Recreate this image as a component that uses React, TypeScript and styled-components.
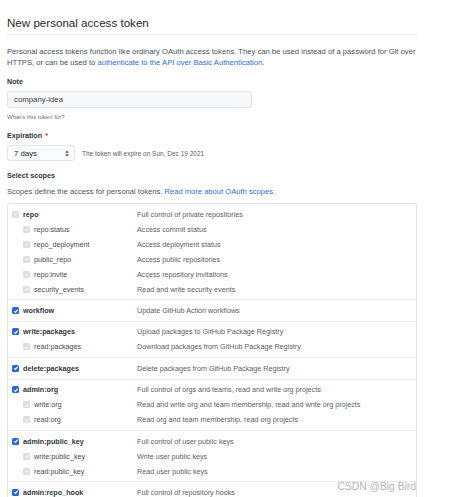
import React from 'react';
import styled, { createGlobalStyle } from 'styled-components';

const GlobalStyle = createGlobalStyle`
	html, body {
		margin: 0;
		padding: 0;
		background: #fff;
	}
	body {
		font-family: "Liberation Sans", Arial, sans-serif;
		color: #24292e;
	}
`

const Page = styled.div`
	position: relative;
	width: 410px;
	padding: 0 7px;
	height: 497px;
	overflow: hidden;
`
const Title = styled.h2`
	margin: 0;
	padding: 13px 0 1px;
	font-size: 11.6px;
	line-height: 20px;
	font-weight: 400;
	color: #24292e;
	border-bottom: 1px solid #e8eaed;
`
const Intro = styled.p`
	margin: 11px 0 0;
	font-size: 7.65px;
	line-height: 11px;
	color: #4a5259;
	white-space: nowrap;
`
const Link = styled.a`
	color: #2f6fd1;
	text-decoration: none;
`
const Label = styled.div<{ gap: number }>`
	margin-top: ${props => props.gap}px;
	font-size: 7.2px;
	line-height: 10px;
	font-weight: 700;
	color: #2f363d;
`
const Required = styled.span`
	color: #cb2431;
	margin-left: 3px;
`
const NoteInput = styled.div`
	margin-top: 4px;
	box-sizing: border-box;
	width: 245px;
	height: 17px;
	padding: 0 6px;
	display: flex;
	align-items: center;
	background: #f6f8fa;
	border: 1px solid #e1e4e8;
	border-radius: 3px;
	font-size: 7.8px;
	color: #3a3f44;
`
const Hint = styled.div`
	margin-top: 4px;
	font-size: 6px;
	line-height: 10px;
	color: #6a737d;
`
const ExpirationRow = styled.div`
	margin-top: 4px;
	display: flex;
	align-items: center;
	gap: 7px;
`
const Select = styled.div`
	box-sizing: border-box;
	width: 68px;
	height: 16px;
	padding: 0 5px 0 6px;
	display: flex;
	align-items: center;
	justify-content: space-between;
	background: #fafbfc;
	border: 1px solid #e1e4e8;
	border-radius: 3px;
	font-size: 7.8px;
	color: #24292e;
`
const ExpireText = styled.span`
	font-size: 6.5px;
	color: #586069;
`
const ScopesIntro = styled.div`
	margin-top: 6px;
	font-size: 7.6px;
	line-height: 10px;
	color: #4a5259;
`
const ScopeTable = styled.div`
	margin-top: 6px;
	border: 1px solid #e1e4e8;
	border-bottom: none;
	border-radius: 3px 3px 0 0;
`
const ScopeGroup = styled.div`
	padding: 2.7px 4px;
	& + & {
		border-top: 1px solid #e8eaed;
	}
`
const ScopeRow = styled.div`
	display: grid;
	grid-template-columns: 125px 1fr;
	height: 15px;
	align-items: center;
	font-size: 7.2px;
`
const ScopeName = styled.label<{ nested: boolean }>`
	display: flex;
	align-items: center;
	gap: 4px;
	padding-left: ${props => props.nested ? 11 : 0}px;
	font-weight: ${props => props.nested ? 400 : 700};
	color: ${props => props.nested ? '#444d56' : '#2f363d'};
`
const Box = styled.span<{ active: boolean }>`
	flex: none;
	box-sizing: border-box;
	width: 7px;
	height: 7px;
	border-radius: 1.5px;
	display: flex;
	align-items: center;
	justify-content: center;
	background: ${props => props.active ? '#2a66d4' : '#dcdee0'};
	& svg {
		width: 6px;
		height: 6px;
	}
`
const ScopeDesc = styled.span`
	color: #586069;
`
const Watermark = styled.div`
	position: absolute;
	right: 8px;
	bottom: 4px;
	font-family: "Liberation Sans", Arial, sans-serif;
	font-size: 10.3px;
	line-height: 13px;
	color: #b4b4b4;
	text-shadow: 0 0 1px #fff;
`

const Check: React.FC<{ active: boolean }> = ({ active }) => (
	<Box active={active}>
		<svg viewBox="0 0 10 10">
			<path d="M2 5.2 L4.2 7.3 L8 2.8" fill="none" stroke={active ? '#fff' : '#f2f3f4'} strokeWidth="1.8" />
		</svg>
	</Box>
)

interface Scope {
	name: string;
	desc: string;
	nested?: boolean;
	active?: boolean;
}

const groups: Scope[][] = [
	[
		{ name: 'repo', desc: 'Full control of private repositories' },
		{ name: 'repo:status', desc: 'Access commit status', nested: true },
		{ name: 'repo_deployment', desc: 'Access deployment status', nested: true },
		{ name: 'public_repo', desc: 'Access public repositories', nested: true },
		{ name: 'repo:invite', desc: 'Access repository invitations', nested: true },
		{ name: 'security_events', desc: 'Read and write security events', nested: true },
	],
	[
		{ name: 'workflow', desc: 'Update GitHub Action workflows', active: true },
	],
	[
		{ name: 'write:packages', desc: 'Upload packages to GitHub Package Registry', active: true },
		{ name: 'read:packages', desc: 'Download packages from GitHub Package Registry', nested: true },
	],
	[
		{ name: 'delete:packages', desc: 'Delete packages from GitHub Package Registry', active: true },
	],
	[
		{ name: 'admin:org', desc: 'Full control of orgs and teams, read and write org projects', active: true },
		{ name: 'write:org', desc: 'Read and write org and team membership, read and write org projects', nested: true },
		{ name: 'read:org', desc: 'Read org and team membership, read org projects', nested: true },
	],
	[
		{ name: 'admin:public_key', desc: 'Full control of user public keys', active: true },
		{ name: 'write:public_key', desc: 'Write user public keys', nested: true },
		{ name: 'read:public_key', desc: 'Read user public keys', nested: true },
	],
	[
		{ name: 'admin:repo_hook', desc: 'Full control of repository hooks', active: true },
	],
]

const Arrows = () => (
	<svg width="4" height="7" viewBox="0 0 4 7">
		<path d="M2 0.5 L3.8 2.8 H0.2 Z M2 6.5 L3.8 4.2 H0.2 Z" fill="#444d56" />
	</svg>
)

export default function App() {
	return (
		<Page>
			<GlobalStyle />
			<Title>New personal access token</Title>
			<Intro>
				Personal access tokens function like ordinary OAuth access tokens. They can be used instead of a password for Git over
				<br />
				HTTPS, or can be used to <Link>authenticate to the API over Basic Authentication</Link>.
			</Intro>
			<Label gap={9}>Note</Label>
			<NoteInput>company-idea</NoteInput>
			<Hint>What's this token for?</Hint>
			<Label gap={9}>Expiration<Required>*</Required></Label>
			<ExpirationRow>
				<Select>
					<span>7 days</span>
					<Arrows />
				</Select>
				<ExpireText>The token will expire on Sun, Dec 19 2021</ExpireText>
			</ExpirationRow>
			<Label gap={10}>Select scopes</Label>
			<ScopesIntro>
				Scopes define the access for personal tokens. <Link>Read more about OAuth scopes.</Link>
			</ScopesIntro>
			<ScopeTable>
				{groups.map((group, gindex) => (
					<ScopeGroup key={gindex}>
						{group.map(scope => (
							<ScopeRow key={scope.name}>
								<ScopeName nested={!!scope.nested}>
									<Check active={!!scope.active} />
									{scope.name}
								</ScopeName>
								<ScopeDesc>{scope.desc}</ScopeDesc>
							</ScopeRow>
						))}
					</ScopeGroup>
				))}
			</ScopeTable>
			<Watermark>CSDN @Big Bird</Watermark>
		</Page>
	)
}
